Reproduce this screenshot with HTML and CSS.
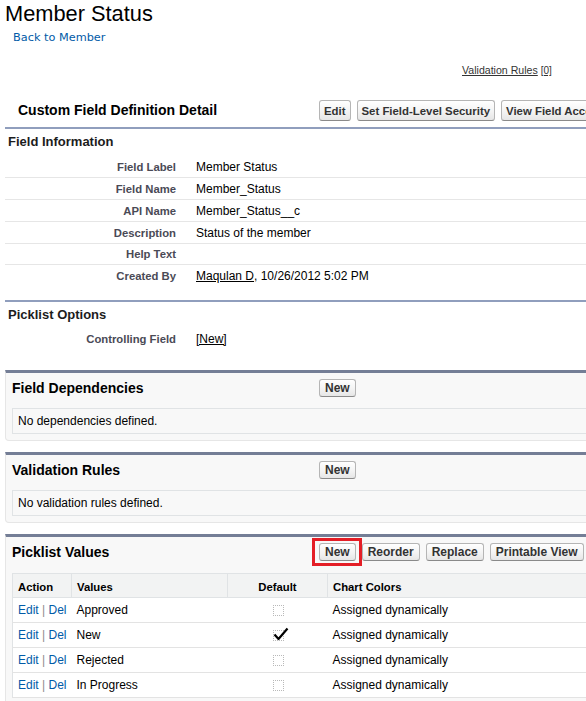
FILE: index.html
```html
<!DOCTYPE html>
<html lang="en">
<head>
<meta charset="utf-8">
<title>Member Status</title>
<link rel="stylesheet" href="styles.css">
</head>
<body>
<div class="page">
  <h1 class="title">Member Status</h1>
  <a class="back" href="#">Back to Member</a>
  <div class="related"><a class="rel-link" href="#">Validation Rules</a> <a class="rel-count" href="#">[0]</a></div>

  <div class="detail">
    <div class="detail-head">
      <h2 class="detail-title">Custom Field Definition Detail</h2>
      <div class="btns">
        <button class="btn btn-top">Edit</button>
        <button class="btn btn-top">Set Field-Level Security</button>
        <button class="btn btn-top">View Field Accessibility</button>
      </div>
    </div>

    <div class="subhead">Field Information</div>
    <div class="fields">
      <div class="row"><div class="label">Field Label</div><div class="val">Member Status</div></div>
      <div class="row"><div class="label">Field Name</div><div class="val">Member_Status</div></div>
      <div class="row"><div class="label">API Name</div><div class="val">Member_Status__c</div></div>
      <div class="row"><div class="label">Description</div><div class="val">Status of the member</div></div>
      <div class="row row-short"><div class="label">Help Text</div><div class="val"></div></div>
      <div class="row row-last"><div class="label">Created By</div><div class="val"><a class="plain-link" href="#">Maqulan D</a>, 10/26/2012 5:02 PM</div></div>
    </div>

    <div class="subhead subhead-gap">Picklist Options</div>
    <div class="fields">
      <div class="row row-last"><div class="label">Controlling Field</div><div class="val"><a class="plain-link" href="#">[New]</a></div></div>
    </div>
  </div>

  <div class="block">
    <div class="block-head">
      <h3 class="block-title">Field Dependencies</h3>
      <div class="btns"><button class="btn btn-sec">New</button></div>
    </div>
    <div class="empty">No dependencies defined.</div>
  </div>

  <div class="block">
    <div class="block-head">
      <h3 class="block-title">Validation Rules</h3>
      <div class="btns"><button class="btn btn-sec">New</button></div>
    </div>
    <div class="empty">No validation rules defined.</div>
  </div>

  <div class="block">
    <div class="block-head block-head-table">
      <h3 class="block-title">Picklist Values</h3>
      <div class="btns">
        <span class="hl-wrap"><button class="btn btn-sec">New</button><span class="highlight"></span></span>
        <button class="btn btn-sec">Reorder</button>
        <button class="btn btn-sec">Replace</button>
        <button class="btn btn-sec">Printable View</button>
      </div>
    </div>
    <table class="list">
      <colgroup>
        <col class="c-action"><col class="c-values"><col class="c-default"><col class="c-colors">
      </colgroup>
      <thead>
        <tr><th>Action</th><th>Values</th><th class="center">Default</th><th>Chart Colors</th></tr>
      </thead>
      <tbody>
        <tr><td><a class="act" href="#">Edit</a><span class="sep"> | </span><a class="act" href="#">Del</a></td><td>Approved</td><td class="center"><span class="cb"></span></td><td>Assigned dynamically</td></tr>
        <tr><td><a class="act" href="#">Edit</a><span class="sep"> | </span><a class="act" href="#">Del</a></td><td>New</td><td class="center"><span class="cb cb-on"><svg class="tick" width="16" height="14" viewBox="0 0 16 14"><path d="M1.5 7.5 L5.5 12 L14.5 1.5" fill="none" stroke="#000" stroke-width="2.2" stroke-linejoin="round"/></svg></span></td><td>Assigned dynamically</td></tr>
        <tr><td><a class="act" href="#">Edit</a><span class="sep"> | </span><a class="act" href="#">Del</a></td><td>Rejected</td><td class="center"><span class="cb"></span></td><td>Assigned dynamically</td></tr>
        <tr><td><a class="act" href="#">Edit</a><span class="sep"> | </span><a class="act" href="#">Del</a></td><td>In Progress</td><td class="center"><span class="cb"></span></td><td>Assigned dynamically</td></tr>
      </tbody>
    </table>
  </div>
</div>
</body>
</html>
```

FILE: styles.css
```css
html, body {
  margin: 0;
  padding: 0;
  overflow: hidden;
  background: #fff;
}
body {
  font-family: "Liberation Sans", Arial, sans-serif;
  color: #000;
}
.page {
  width: 640px;
}
.title {
  margin: 0;
  padding: 1px 0 0 5px;
  font-size: 21.8px;
  line-height: 25px;
  font-weight: normal;
  color: #000;
}
.back {
  display: block;
  margin-top: 5px;
  padding-left: 13px;
  font-family: "DejaVu Sans", Verdana, sans-serif;
  font-size: 11.3px;
  line-height: 14px;
  color: #015ba7;
  text-decoration: none;
}
.related {
  margin-top: 19px;
  padding-left: 462px;
  font-size: 10.6px;
  line-height: 13px;
  white-space: nowrap;
}
.rel-link, .rel-count {
  color: #333;
  text-decoration: underline;
}
.rel-count {
  font-size: 10px;
}

/* detail */
.detail {
  margin-top: 20px;
  margin-left: 5px;
}
.detail-head {
  display: grid;
  grid-template-columns: 314px 1fr;
  align-items: center;
  padding: 3px 0 6px;
}
.detail-title {
  margin: 0;
  padding-left: 13px;
  font-size: 14px;
  line-height: 17px;
  font-weight: bold;
}
.btns {
  display: flex;
  gap: 6px;
  white-space: nowrap;
  align-items: center;
}
.btn {
  font-family: "Liberation Sans", Arial, sans-serif;
  font-weight: bold;
  color: #333;
  border: 1px solid #b5b5b5;
  border-bottom-color: #8a8a8a;
  border-radius: 3px;
  background: linear-gradient(#ffffff, #f3f3f3 55%, #e6e6e6);
  box-sizing: border-box;
  margin: 0;
  white-space: nowrap;
}
.btn-top {
  height: 21px;
  padding: 0 4px;
  font-size: 11.4px;
}
.btn-sec {
  height: 18px;
  padding: 0 5px;
  font-size: 12px;
  line-height: 14px;
}
.subhead {
  border-top: 2px solid #909ebd;
  padding: 5px 3px 6px;
  font-size: 13px;
  line-height: 16px;
  font-weight: bold;
  color: #1c1c1c;
}
.subhead-gap {
  margin-top: 13px;
  padding-bottom: 5px;
}
.row {
  display: flex;
  align-items: center;
  height: 22px;
  box-sizing: border-box;
  border-bottom: 1px solid #e6e6e6;
}
.row-short {
  height: 21px;
}
.row-last {
  border-bottom: none;
}
.label {
  width: 181px;
  flex: none;
  box-sizing: border-box;
  padding-right: 10px;
  text-align: right;
  font-size: 11.3px;
  font-weight: bold;
  color: #4a4a56;
}
.val {
  padding-left: 10px;
  font-size: 12px;
  color: #000;
}
.plain-link {
  color: #000;
  text-decoration: underline;
}

/* blocks */
.block {
  margin: 20px 0 0 5px;
  width: 620px;
  box-sizing: border-box;
  border: 1px solid #e6e6e6;
  border-top: 3px solid #747e96;
  border-radius: 0 0 4px 4px;
  background: #f8f8f8;
  padding: 0 6px 6px;
}
.block + .block {
  margin-top: 11px;
}
.block-head {
  display: grid;
  grid-template-columns: 307px 1fr;
  align-items: center;
  padding: 6px 0 11px;
}
.block-head-table {
  padding-bottom: 12px;
}
.block-title {
  margin: 0;
  font-size: 14px;
  line-height: 17px;
  font-weight: bold;
  color: #000;
}
.empty {
  height: 26px;
  box-sizing: border-box;
  border: 1px solid #e0e3e5;
  padding-left: 5px;
  display: flex;
  align-items: center;
  font-size: 12px;
  color: #000;
  background: #f8f8f8;
}
.hl-wrap {
  position: relative;
  display: inline-flex;
}
.highlight {
  position: absolute;
  left: -7px;
  right: -6px;
  top: -5px;
  bottom: -5px;
  border: 3px solid #e41e26;
  pointer-events: none;
}

/* table */
.list {
  border-collapse: collapse;
  table-layout: fixed;
  width: 607px;
  background: #fff;
  border: 1px solid #e0e3e5;
}
.c-action { width: 59px; }
.c-values { width: 156px; }
.c-default { width: 100px; }
.list th {
  height: 24px;
  box-sizing: border-box;
  background: #f2f3f3;
  border-bottom: 1px solid #e0e3e5;
  border-left: 1px solid #e0e3e5;
  text-align: left;
  padding: 2px 5px 0;
  font-size: 11.3px;
  font-weight: bold;
  color: #000;
}
.list td {
  height: 25px;
  box-sizing: border-box;
  border-bottom: 1px solid #e3e3e3;
  padding: 0 5px;
  font-size: 12px;
  color: #000;
  white-space: nowrap;
}
.list .center {
  text-align: center;
}
.act {
  color: #015ba7;
  text-decoration: none;
}
.sep {
  color: #8c8c8c;
}
.cb {
  display: inline-block;
  position: relative;
  width: 11px;
  height: 11px;
  box-sizing: border-box;
  border: 1px dotted #b9b9b9;
  vertical-align: middle;
  margin-left: 2px;
}
.tick {
  position: absolute;
  left: -1px;
  top: -4px;
}
```
